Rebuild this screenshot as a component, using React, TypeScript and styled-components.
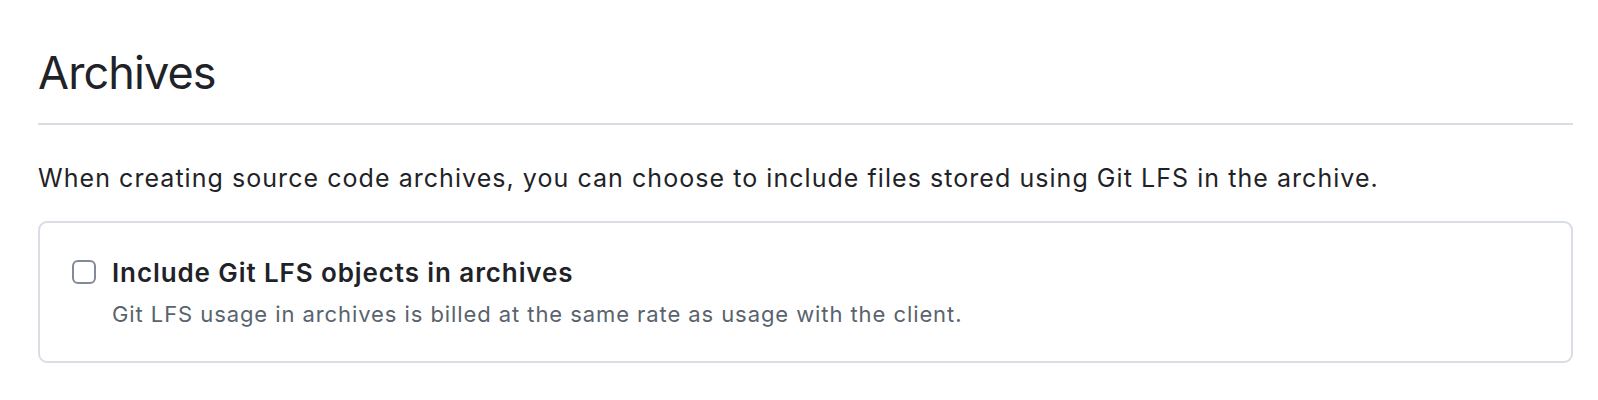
import styled, { createGlobalStyle } from "styled-components"

const GlobalStyle = createGlobalStyle`
  body {
    margin: 0;
    background: #ffffff;
    color: #1f2328;
    font-family: Inter, "Liberation Sans", Arial, sans-serif;
  }
`

const App: React.FC = () => (
  <>
    <GlobalStyle />
    <Page>
      <Subhead>
        <Heading>Archives</Heading>
      </Subhead>

      <Description>
        When creating source code archives, you can choose to include files stored using Git LFS in the archive.
      </Description>

      <OptionBox>
        <OptionRow>
          <Checkbox type="checkbox" id="include-lfs" />
          <OptionText>
            <OptionLabel htmlFor="include-lfs">Include Git LFS objects in archives</OptionLabel>
            <OptionNote>Git LFS usage in archives is billed at the same rate as usage with the client.</OptionNote>
          </OptionText>
        </OptionRow>
      </OptionBox>
    </Page>
  </>
)

const Page = styled.main`
  padding: 45px 25px 0 38px;
`

const Subhead = styled.div`
  padding-bottom: 22px;
  border-bottom: 2px solid #d8dee4;
`

const Heading = styled.h2`
  margin: 0;
  font-size: 45px;
  font-weight: 400;
  line-height: 1.25;
  letter-spacing: -0.9px;
`

const Description = styled.p`
  margin: 35px 0 0;
  font-size: 25px;
  line-height: 1.5;
  letter-spacing: 1.05px;
`

const OptionBox = styled.div`
  margin-top: 23px;
  border: 2px solid #d8dee4;
  border-radius: 9px;
  padding: 30px 32px 30px;
`

const OptionRow = styled.div`
  display: flex;
  align-items: flex-start;
  gap: 16px;
`

const Checkbox = styled.input`
  appearance: none;
  margin: 7px 0 0;
  width: 24px;
  height: 24px;
  flex: none;
  border: 2px solid #818b98;
  border-radius: 6px;
  background: #ffffff;
`

const OptionText = styled.div`
  display: flex;
  flex-direction: column;
`

const OptionLabel = styled.label`
  font-size: 26px;
  font-weight: 600;
  line-height: 1.5;
  letter-spacing: 0.9px;
`

const OptionNote = styled.span`
  margin-top: 6px;
  font-size: 22px;
  line-height: 1.5;
  letter-spacing: 0.92px;
  color: #59636e;
`

export default App
